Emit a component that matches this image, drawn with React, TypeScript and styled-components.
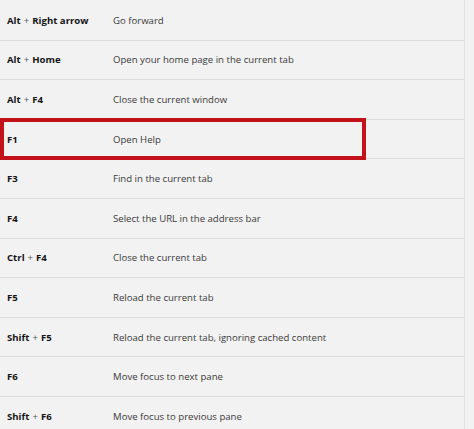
import React from "react";
import styled, { createGlobalStyle } from "styled-components";

const Global = createGlobalStyle`
  html, body { margin: 0; padding: 0; background: #f2f2f2; }
  body { font-family: "Open Sans", "Noto Sans", sans-serif; color: #333; }
`;

const Table = styled.div`
  width: 464px;
  padding-top: 1px;
  border-right: 1px solid #e2e2e2;
  display: flex;
  flex-direction: column;
`;

const Row = styled.div`
  position: relative;
  display: grid;
  grid-template-columns: 113px 1fr;
  align-items: center;
  height: 39.6px;
  box-sizing: border-box;
  border-bottom: 1px solid #dcdcdc;
  font-size: 9.6px;
`;

const Highlight = styled.div`
  position: absolute;
  left: 0;
  top: -2px;
  width: 366px;
  height: 42px;
  box-sizing: border-box;
  border: 4px solid #c4121a;
  pointer-events: none;
`;

const Keys = styled.div`
  padding-left: 7px;
  color: #141414;
  white-space: nowrap;
`;

const Key = styled.b`
  font-weight: 700;
`;

const Plus = styled.span`
  color: #555;
  margin: 0 3px;
`;

const Desc = styled.div`
  color: #3a3a3a;
  white-space: nowrap;
`;

const rows: { keys: string[]; desc: string; hi?: boolean }[] = [
  { keys: ["Alt", "Right arrow"], desc: "Go forward" },
  { keys: ["Alt", "Home"], desc: "Open your home page in the current tab" },
  { keys: ["Alt", "F4"], desc: "Close the current window" },
  { keys: ["F1"], desc: "Open Help", hi: true },
  { keys: ["F3"], desc: "Find in the current tab" },
  { keys: ["F4"], desc: "Select the URL in the address bar" },
  { keys: ["Ctrl", "F4"], desc: "Close the current tab" },
  { keys: ["F5"], desc: "Reload the current tab" },
  { keys: ["Shift", "F5"], desc: "Reload the current tab, ignoring cached content" },
  { keys: ["F6"], desc: "Move focus to next pane" },
  { keys: ["Shift", "F6"], desc: "Move focus to previous pane" },
];

export default function App() {
  return (
    <>
      <Global />
      <Table>
        {rows.map((r, i) => (
          <Row key={i}>
            <Keys>
              {r.keys.map((k, j) => (
                <React.Fragment key={j}>
                  {j > 0 && <Plus>+</Plus>}
                  <Key>{k}</Key>
                </React.Fragment>
              ))}
            </Keys>
            <Desc>{r.desc}</Desc>
            {r.hi && <Highlight />}
          </Row>
        ))}
      </Table>
    </>
  );
}
